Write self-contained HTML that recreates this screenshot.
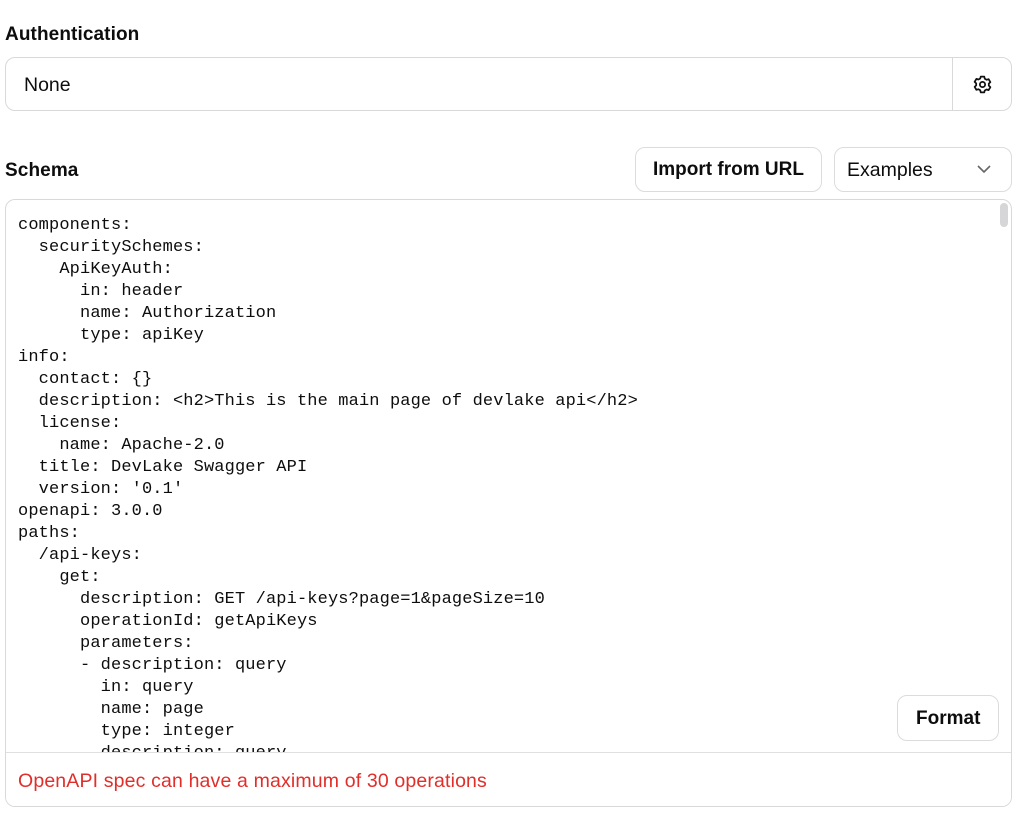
<!DOCTYPE html>
<html><head><meta charset="utf-8"><style>
*{box-sizing:border-box;margin:0;padding:0}
body{width:1024px;height:816px;background:#fff;font-family:"Liberation Sans",sans-serif;color:#0d0d0d;position:relative;overflow:hidden}
.lbl{position:absolute;left:5px;font-size:19px;font-weight:bold;letter-spacing:0.1px}
.auth{position:absolute;left:5px;top:57px;width:1007px;height:54px;border:1px solid #d9d9d9;border-radius:10px}
.auth .t{position:absolute;left:18px;top:16px;font-size:19.5px}
.auth .sep{position:absolute;left:946px;top:0;bottom:0;border-left:1px solid #d9d9d9}
.btn{position:absolute;top:147px;height:45px;border:1px solid #dcdcdc;border-radius:10px;font-size:19px}
.box{position:absolute;left:5px;top:199px;width:1007px;height:608px;border:1px solid #d9d9d9;border-radius:10px;overflow:hidden}
pre{position:absolute;left:12px;top:15px;font-family:"Liberation Mono",monospace;font-size:17px;letter-spacing:0.13px;line-height:22px;color:#0d0d0d}
.div{position:absolute;left:0;right:0;top:552px;border-top:1px solid #e0e0e0;background:#fff;height:60px}
.err{position:absolute;left:12px;top:17px;font-size:19.5px;letter-spacing:0.15px;color:#e02e2a}
.sb{position:absolute;right:3px;top:3px;width:8px;height:24px;background:#d6d6d9;border-radius:4px}
</style></head><body>
<div class="lbl" style="top:24px">Authentication</div>
<div class="auth"><div class="t">None</div><div class="sep"></div>
<svg style="position:absolute;left:966px;top:16px" width="21" height="21" viewBox="0 0 24 24" fill="none" stroke="#111" stroke-width="2" stroke-linejoin="round"><path d="M10 3h4l.6 2.4 2 1.2 2.4-.7 2 3.4-1.8 1.7v2.3l1.8 1.7-2 3.4-2.4-.7-2 1.2L14 21h-4l-.6-2.4-2-1.2-2.4.7-2-3.4 1.8-1.7v-2.3L3 9l2-3.4 2.4.7 2-1.2z"/><circle cx="12" cy="12" r="3"/></svg>
</div>
<div class="lbl" style="top:160px">Schema</div>
<div class="btn" style="left:635px;width:187px"><span style="position:absolute;left:17px;top:11px;font-weight:bold;font-size:19px">Import from URL</span></div>
<div class="btn" style="left:834px;width:178px"><span style="position:absolute;left:12px;top:11px;font-size:19.5px">Examples</span>
<svg style="position:absolute;left:141px;top:15px" width="16" height="12" viewBox="0 0 16 12"><path d="M2 3l6 6 6-6" fill="none" stroke="#666" stroke-width="1.6"/></svg></div>
<div class="box">
<pre>components:
  securitySchemes:
    ApiKeyAuth:
      in: header
      name: Authorization
      type: apiKey
info:
  contact: {}
  description: &lt;h2&gt;This is the main page of devlake api&lt;/h2&gt;
  license:
    name: Apache-2.0
  title: DevLake Swagger API
  version: '0.1'
openapi: 3.0.0
paths:
  /api-keys:
    get:
      description: GET /api-keys?page=1&amp;pageSize=10
      operationId: getApiKeys
      parameters:
      - description: query
        in: query
        name: page
        type: integer
        description: query</pre>
<div class="sb"></div>
<div class="btn" style="left:891px;top:495px;width:102px;height:46px;background:#fff"><span style="position:absolute;left:18px;top:12px;font-weight:bold;font-size:19px">Format</span></div>
<div class="div"><div class="err">OpenAPI spec can have a maximum of 30 operations</div></div>
</div>
</body></html>
